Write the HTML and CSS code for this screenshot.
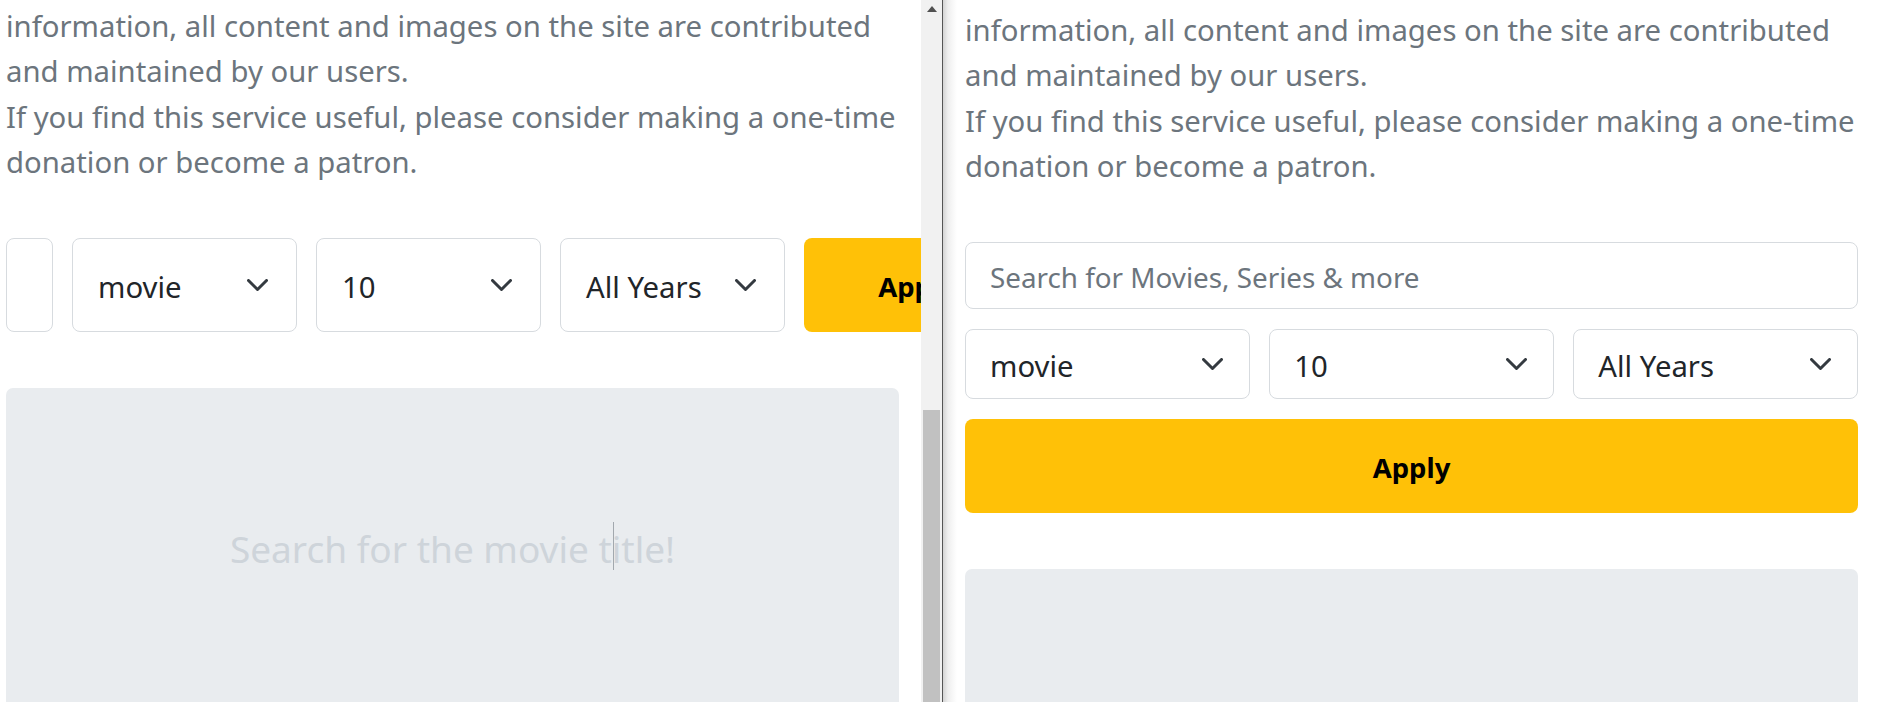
FILE: index.html
```html
<!DOCTYPE html>
<html lang="en">
<head>
<meta charset="utf-8">
<title>Search</title>
<link rel="stylesheet" href="styles.css">
</head>
<body>
<div class="screen">
  <section class="pane pane-left">
    <div class="content content-left">
      <p class="lead lead-left">information, all content and images on the site are contributed<br>and maintained by our users.<br>If you find this service useful, please consider making a one-time<br>donation or become a patron.</p>
      <div class="filters-row">
        <input class="field field-narrow" type="text" aria-label="Search">
        <div class="select select-left"><span>movie</span><svg class="chev" width="21" height="12" viewBox="0 0 14 8"><path d="M1 1l6 6 6-6" fill="none" stroke="#343a40" stroke-width="2" stroke-linecap="round" stroke-linejoin="round"/></svg></div>
        <div class="select select-left"><span>10</span><svg class="chev" width="21" height="12" viewBox="0 0 14 8"><path d="M1 1l6 6 6-6" fill="none" stroke="#343a40" stroke-width="2" stroke-linecap="round" stroke-linejoin="round"/></svg></div>
        <div class="select select-left"><span>All Years</span><svg class="chev" width="21" height="12" viewBox="0 0 14 8"><path d="M1 1l6 6 6-6" fill="none" stroke="#343a40" stroke-width="2" stroke-linecap="round" stroke-linejoin="round"/></svg></div>
        <button class="apply apply-left">Apply</button>
      </div>
      <div class="results results-left">
        <span class="results-text">Search for the movie title!</span>
        <span class="ibeam"></span>
      </div>
    </div>
  </section>
  <div class="scrollbar">
    <div class="sb-up"><svg width="10" height="6" viewBox="0 0 10 6"><path d="M0 6L5 0l5 6z" fill="#505050"/></svg></div>
    <div class="sb-thumb"></div>
  </div>
  <div class="divider"></div>
  <section class="pane pane-right">
    <div class="content content-right">
      <p class="lead lead-right">information, all content and images on the site are contributed<br>and maintained by our users.<br>If you find this service useful, please consider making a one-time<br>donation or become a patron.</p>
      <input class="field field-search" type="text" placeholder="Search for Movies, Series &amp; more">
      <div class="selects-row">
        <div class="select select-right"><span>movie</span><svg class="chev" width="21" height="12" viewBox="0 0 14 8"><path d="M1 1l6 6 6-6" fill="none" stroke="#343a40" stroke-width="2" stroke-linecap="round" stroke-linejoin="round"/></svg></div>
        <div class="select select-right"><span>10</span><svg class="chev" width="21" height="12" viewBox="0 0 14 8"><path d="M1 1l6 6 6-6" fill="none" stroke="#343a40" stroke-width="2" stroke-linecap="round" stroke-linejoin="round"/></svg></div>
        <div class="select select-right"><span>All Years</span><svg class="chev" width="21" height="12" viewBox="0 0 14 8"><path d="M1 1l6 6 6-6" fill="none" stroke="#343a40" stroke-width="2" stroke-linecap="round" stroke-linejoin="round"/></svg></div>
      </div>
      <button class="apply apply-right">Apply</button>
      <div class="results results-right"></div>
    </div>
  </section>
</div>
</body>
</html>
```

FILE: styles.css
```css
* { box-sizing: border-box; }
html, body {
  margin: 0;
  padding: 0;
  background: #fff;
}
body {
  width: 1880px;
  height: 702px;
  overflow: hidden;
  font-family: "Noto Sans", "Open Sans", sans-serif;
}
.screen {
  display: flex;
  width: 1880px;
  height: 702px;
}
.pane {
  height: 702px;
  overflow: hidden;
}
.pane-left {
  flex: 0 0 921px;
  padding-left: 6px;
}
.pane-right {
  flex: 1 1 auto;
  padding: 0 22px;
  background: linear-gradient(to right, #d4d4d4 0px, #efefef 5px, #fff 14px);
}
.content {
  width: 893px;
  display: flex;
  flex-direction: column;
}
.lead {
  margin: 0;
  font-size: 29.3px;
  line-height: 45.3px;
  color: #6c757d;
  white-space: nowrap;
}
.lead-left { margin-top: 4px; }
.lead-right { margin-top: 8px; }

.field {
  font-family: inherit;
  font-size: 27.8px;
  border: 1px solid #d7dbdf;
  border-radius: 8px;
  background: #fff;
  outline: none;
  color: #212529;
}
.field::placeholder { color: #6c757d; }
.field-narrow {
  flex: 0 0 47px;
  width: 47px;
  padding: 0;
}
.field-search {
  margin-top: 53px;
  height: 67px;
  width: 100%;
  padding: 3px 24px 0;
}

.filters-row {
  display: flex;
  gap: 19px;
  height: 94px;
  margin-top: 53px;
  width: 1100px;
}
.select {
  display: flex;
  align-items: center;
  justify-content: space-between;
  border: 1px solid #d7dbdf;
  border-radius: 8px;
  background: #fff;
  color: #212529;
  font-size: 29.3px;
  padding: 0 28px 0 25px;
}
.select span { line-height: 1; padding-top: 4px; }
.chev { flex: none; display: block; }
.select-left { flex: 0 0 225px; }
.selects-row {
  display: flex;
  gap: 19.5px;
  margin-top: 20px;
  height: 70px;
}
.select-right { flex: 1 1 0; padding-right: 26px; padding-left: 24px; }

.apply {
  font-family: inherit;
  font-weight: 700;
  font-size: 27.5px;
  color: #000;
  background: #ffc107;
  border: 0;
  border-radius: 8px;
  padding: 2px 0 0;
}
.apply-left { flex: 0 0 226px; }
.apply-right {
  margin-top: 20px;
  height: 94px;
  width: 100%;
}

.results {
  background: #e9ecef;
  border-radius: 7px;
  display: flex;
  align-items: center;
  justify-content: center;
  position: relative;
}
.results-left {
  margin-top: 56px;
  height: 324px;
}
.results-right {
  margin-top: 56px;
  height: 324px;
}
.results-text {
  font-size: 37px;
  color: #ced4da;
  padding-bottom: 4px;
}
.ibeam {
  position: absolute;
  left: 607px;
  top: 134px;
  width: 1px;
  height: 48px;
  background: #a2a8ae;
}

.scrollbar {
  flex: 0 0 21px;
  height: 702px;
  background: #f1f1f1;
  display: flex;
  flex-direction: column;
  align-items: center;
}
.sb-up {
  height: 17px;
  width: 100%;
  display: flex;
  align-items: center;
  justify-content: center;
}
.sb-thumb {
  margin-top: auto;
  width: 17px;
  height: 292px;
  background: #c1c1c1;
}
.divider {
  flex: 0 0 1px;
  height: 702px;
  background: #555;
}
```
